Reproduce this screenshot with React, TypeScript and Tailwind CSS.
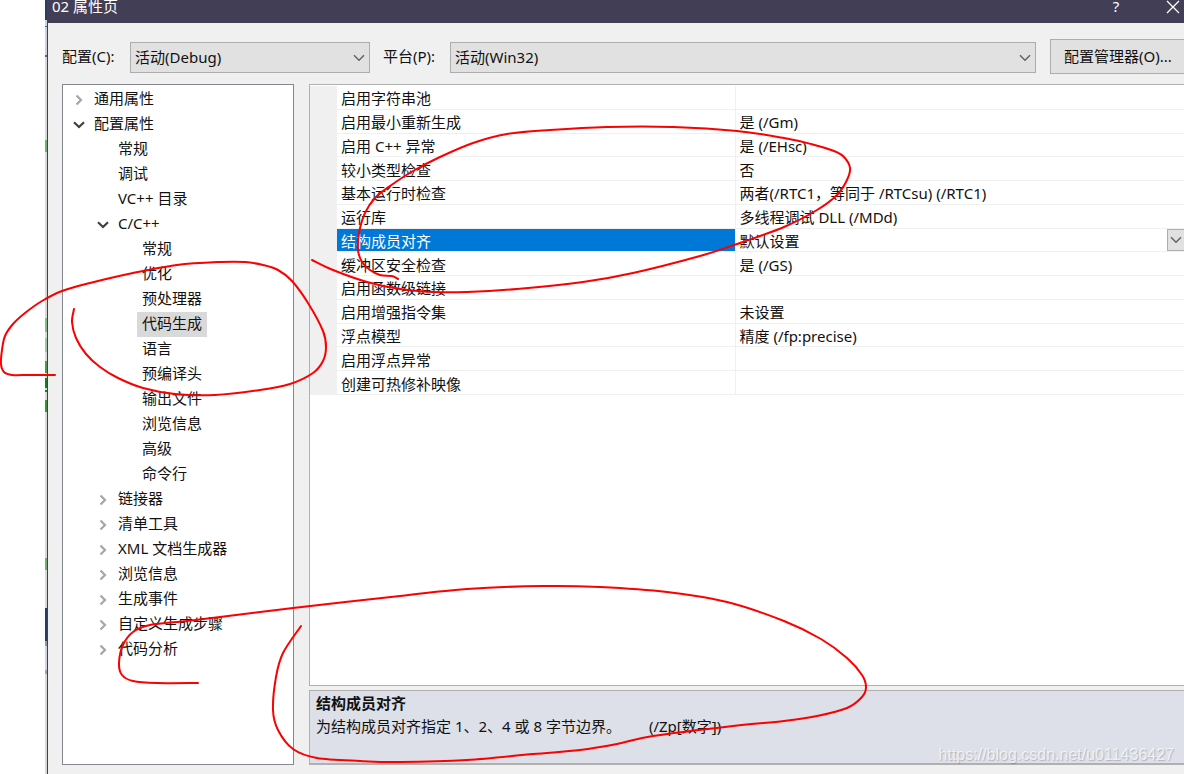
type TreeItem = { label: string; level: 0 | 1 | 2; state?: 'open' | 'closed'; selected?: boolean }
type Point = [number, number]

const tree: TreeItem[] = [
  { label: '通用属性', level: 0, state: 'closed' },
  { label: '配置属性', level: 0, state: 'open' },
  { label: '常规', level: 1 },
  { label: '调试', level: 1 },
  { label: 'VC++ 目录', level: 1 },
  { label: 'C/C++', level: 1, state: 'open' },
  { label: '常规', level: 2 },
  { label: '优化', level: 2 },
  { label: '预处理器', level: 2 },
  { label: '代码生成', level: 2, selected: true },
  { label: '语言', level: 2 },
  { label: '预编译头', level: 2 },
  { label: '输出文件', level: 2 },
  { label: '浏览信息', level: 2 },
  { label: '高级', level: 2 },
  { label: '命令行', level: 2 },
  { label: '链接器', level: 1, state: 'closed' },
  { label: '清单工具', level: 1, state: 'closed' },
  { label: 'XML 文档生成器', level: 1, state: 'closed' },
  { label: '浏览信息', level: 1, state: 'closed' },
  { label: '生成事件', level: 1, state: 'closed' },
  { label: '自定义生成步骤', level: 1, state: 'closed' },
  { label: '代码分析', level: 1, state: 'closed' },
]

const properties = [
  { name: '启用字符串池', value: '' },
  { name: '启用最小重新生成', value: '是 (/Gm)' },
  { name: '启用 C++ 异常', value: '是 (/EHsc)' },
  { name: '较小类型检查', value: '否' },
  { name: '基本运行时检查', value: '两者(/RTC1，等同于 /RTCsu) (/RTC1)' },
  { name: '运行库', value: '多线程调试 DLL (/MDd)' },
  { name: '结构成员对齐', value: '默认设置', selected: true },
  { name: '缓冲区安全检查', value: '是 (/GS)' },
  { name: '启用函数级链接', value: '' },
  { name: '启用增强指令集', value: '未设置' },
  { name: '浮点模型', value: '精度 (/fp:precise)' },
  { name: '启用浮点异常', value: '' },
  { name: '创建可热修补映像', value: '' },
]

const indent = { 0: 'pl-2', 1: 'pl-8', 2: 'pl-14' }

// Freehand pen marks over the dialog
const strokes: Point[][] = [
  [
    [55, 375], [30, 375], [12, 375], [4, 372], [1, 364], [2, 350], [5, 336], [13, 324], [25, 313], [42, 301], [62, 291],
    [90, 283], [133, 273], [177, 265], [220, 262], [245, 262], [263, 265], [278, 270], [292, 281], [308, 303], [323, 331],
    [326, 347], [323, 361], [313, 373], [290, 384], [260, 390], [215, 395], [175, 394], [143, 388], [118, 378], [100, 367],
    [86, 354], [76, 338], [72, 322], [74, 309],
  ],
  [
    [312, 260], [333, 270], [367, 282], [400, 289], [433, 292], [467, 292], [517, 289], [583, 282], [633, 273], [700, 256],
    [734, 245], [784, 227], [817, 210], [837, 195], [847, 180], [850, 168], [844, 157], [834, 151], [811, 144], [784, 138],
    [737, 131], [673, 127], [607, 127], [550, 130], [507, 134], [473, 143], [440, 157], [413, 171], [390, 186], [375, 198],
    [365, 213], [359, 233], [358, 250], [362, 262], [370, 270], [380, 275], [392, 276], [398, 279],
  ],
  [
    [198, 683], [157, 683], [133, 681], [122, 675], [119, 663], [123, 645], [133, 632], [150, 625], [187, 621], [220, 617],
    [293, 608], [400, 596], [467, 589], [543, 586], [600, 587], [667, 592], [727, 602], [784, 621], [821, 639], [847, 658],
    [862, 675], [866, 687], [862, 697], [847, 708], [817, 716], [784, 721], [733, 726], [653, 736], [617, 744], [580, 750],
    [533, 754], [467, 760], [400, 762], [360, 761], [317, 758], [293, 749], [278, 730], [273, 710], [276, 677], [283, 653],
    [301, 626],
  ],
]

// What shows of the editor window behind the dialog
const backdrop: { top: number; height: number; color: string }[] = [
  { top: 0, height: 20, color: '#2b3d5c' },
  { top: 20, height: 6, color: '#ced3df' },
  { top: 26, height: 1, color: '#5b6480' },
  { top: 27, height: 28, color: '#ced0dc' },
  { top: 55, height: 2, color: '#5b6480' },
  { top: 140, height: 12, color: '#6fae6f' },
  { top: 318, height: 14, color: '#86b986' },
  { top: 338, height: 14, color: '#9fc79f' },
  { top: 361, height: 12, color: '#4f9a4f' },
  { top: 378, height: 10, color: '#188018' },
  { top: 390, height: 2, color: '#188018' },
  { top: 400, height: 12, color: '#3b903b' },
  { top: 558, height: 12, color: '#6fae6f' },
  { top: 608, height: 33, color: '#2b3d5c' },
  { top: 641, height: 5, color: '#8d97ad' },
  { top: 646, height: 24, color: '#ced3df' },
  { top: 670, height: 4, color: '#9aa3b8' },
]

function smoothPath(points: Point[]) {
  let d = `M${points[0][0]} ${points[0][1]}`
  for (let i = 0; i < points.length - 1; i++) {
    const a = points[i - 1] ?? points[i]
    const b = points[i]
    const c = points[i + 1]
    const e = points[i + 2] ?? c
    d += `C${b[0] + (c[0] - a[0]) / 6} ${b[1] + (c[1] - a[1]) / 6} ${c[0] - (e[0] - b[0]) / 6} ${c[1] - (e[1] - b[1]) / 6} ${c[0]} ${c[1]}`
  }
  return d
}

function DownArrow({ className }: { className?: string }) {
  return (
    <svg width="12" height="8" viewBox="0 0 12 8" fill="none" className={className} aria-hidden="true">
      <path d="M1 1.2 6 6.2 11 1.2" stroke="#636363" strokeWidth="1.5" />
    </svg>
  )
}

function TreeArrow({ state }: { state?: 'open' | 'closed' }) {
  return (
    <span className="flex w-4 shrink-0 justify-center">
      {state === 'closed' && (
        <svg width="8" height="12" viewBox="0 0 8 12" fill="none" aria-hidden="true">
          <path d="M1.5 1.5 6 6 1.5 10.5" stroke="#a6a6a6" strokeWidth="2.2" />
        </svg>
      )}
      {state === 'open' && (
        <svg width="12" height="8" viewBox="0 0 12 8" fill="none" aria-hidden="true">
          <path d="M1 1.2 6 6 11 1.2" stroke="#404040" strokeWidth="2.2" />
        </svg>
      )}
    </span>
  )
}

function ComboBox({ id, value, className }: { id: string; value: string; className: string }) {
  return (
    <div className={`relative mt-0.5 ${className}`}>
      <select id={id} className="h-[31px] w-full appearance-none border border-[#adadad] bg-[#e1e1e1] pr-8 pb-0.5 pl-1">
        <option>{value}</option>
      </select>
      <DownArrow className="pointer-events-none absolute top-3 right-[5px]" />
    </div>
  )
}

export default function App() {
  return (
    <div className="relative flex min-h-screen overflow-hidden bg-white font-['Noto_Sans','Noto_Sans_CJK_SC',sans-serif] text-[15px] leading-5 text-[#111]">
      <div className="relative ml-[45px] w-0.5 shrink-0 bg-[#d8d8d8]">
        {backdrop.map((b) => (
          <div key={b.top} className="absolute left-0 w-full" style={{ top: b.top, height: b.height, background: b.color }} />
        ))}
      </div>

      <main className="flex min-w-0 flex-1 flex-col border-l border-[#423e56] bg-[#f0f0f0] pb-[9px]">
        <header className="flex h-[23px] items-center bg-[#423e56] pb-[11px] pl-1 leading-3 text-white">
          <h1 className="flex-1">02 属性页</h1>
          <button aria-label="帮助" className="w-5 text-center">?</button>
          <button aria-label="关闭" className="ml-10 pt-0.5 pr-1">
            <svg width="14" height="14" viewBox="0 0 14 14" aria-hidden="true">
              <path d="M1 1 13 13M13 1 1 13" stroke="#fff" strokeWidth="1.3" />
            </svg>
          </button>
        </header>

        <div className="mt-4 flex h-[35px] items-center pl-3.5">
          <label htmlFor="configuration" className="w-[68px] shrink-0 pb-0.5">配置(C):</label>
          <ComboBox id="configuration" value="活动(Debug)" className="w-60 shrink-0" />
          <label htmlFor="platform" className="ml-[13px] w-[67px] shrink-0 pb-0.5">平台(P):</label>
          <ComboBox id="platform" value="活动(Win32)" className="min-w-0 flex-1" />
          <button className="ml-3.5 h-[35px] w-[134px] shrink-0 border border-r-0 border-[#adadad] bg-[#e1e1e1] pb-0.5 pl-[13px] text-left whitespace-nowrap">
            配置管理器(O)...
          </button>
        </div>

        <div className="mt-2.5 flex flex-1 gap-[15px] pl-3.5">
          <nav className="w-[232px] shrink-0 border border-[#828790] bg-white pt-0.5">
            <ul>
              {tree.map((item, i) => (
                <li key={i} className={`flex h-[25px] items-center gap-0.5 ${indent[item.level]}`}>
                  <TreeArrow state={item.state} />
                  <button className={`h-[25px] px-[5px] pb-1 whitespace-nowrap ${item.selected ? 'bg-[#d9d9d9]' : ''}`}>{item.label}</button>
                </li>
              ))}
            </ul>
          </nav>

          <section className="flex min-w-0 flex-1 flex-col">
            <div className="flex-1 border border-r-0 border-[#b0b0b0] bg-white pt-px">
              <table className="h-[309px] w-full table-fixed border-collapse">
                <colgroup>
                  <col className="w-[27px]" />
                  <col className="w-[398px]" />
                  <col />
                </colgroup>
                <tbody>
                  {properties.map((p) => (
                    <tr key={p.name} className="border-b border-[#f0f0f0]">
                      <td className="bg-[#f0f0f0] p-0" />
                      <th
                        scope="row"
                        className={`border-r border-[#f0f0f0] p-0 pt-0.5 pl-1 text-left font-normal ${p.selected ? 'bg-[#0078d7] text-white' : ''}`}
                      >
                        {p.name}
                      </th>
                      <td className="p-0 pl-1">
                        <div className="flex justify-between">
                          <span className="pt-0.5">{p.value}</span>
                          {p.selected && (
                            <button aria-label="选择" className="flex w-[17px] items-center justify-center border border-r-0 border-[#adadad] bg-[#e1e1e1]">
                              <DownArrow />
                            </button>
                          )}
                        </div>
                      </td>
                    </tr>
                  ))}
                </tbody>
              </table>
            </div>
            <div className="relative mt-1 h-[75px] border border-r-0 border-b-2 border-[#b0b0b0] bg-[#dde0e8] pl-1.5">
              <h2 className="pt-px leading-[22px] font-bold">结构成员对齐</h2>
              <p className="leading-6">
                为结构成员对齐指定 1、2、4 或 8 字节边界。<span className="ml-7">(/Zp[数字])</span>
              </p>
              <span className="absolute right-2.5 bottom-0 font-['Liberation_Sans',Arial,sans-serif] text-base leading-4 text-white/70 [text-shadow:1px_1px_1px_rgba(0,0,0,0.2)]">
                https://blog.csdn.net/u011436427
              </span>
            </div>
          </section>
        </div>
      </main>

      <svg className="pointer-events-none absolute inset-0 h-full w-full" fill="none" stroke="#fb0000" strokeWidth="2" strokeLinecap="round" aria-hidden="true">
        {strokes.map((points, i) => (
          <path key={i} d={smoothPath(points)} />
        ))}
      </svg>
    </div>
  )
}
